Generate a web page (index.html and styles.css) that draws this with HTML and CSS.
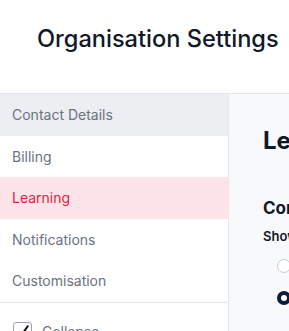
FILE: index.html
```html
<!DOCTYPE html>
<html lang="en">
<head>
    <meta charset="UTF-8">
    <meta name="viewport" content="width=device-width, initial-scale=1.0">
    <title>Organisation Settings</title>
    <link rel="stylesheet" href="styles.css">
</head>
<body>
    <div id="page">
        <header class="page-header">
            <h1>Organisation Settings</h1>
        </header>
        <div id="settings">
            <nav class="sidebar">
                <ul class="menu">
                    <li class="menu-item hover">Contact Details</li>
                    <li class="menu-item">Billing</li>
                    <li class="menu-item active">Learning</li>
                    <li class="menu-item">Notifications</li>
                    <li class="menu-item">Customisation</li>
                </ul>
                <label class="collapse">
                    <span class="box">
                        <svg width="18" height="18" viewBox="0 0 18 18"><path d="M4 10.5 L7.5 14 L14.5 4" fill="none" stroke="#111" stroke-width="2.2" stroke-linecap="round" stroke-linejoin="round"/></svg>
                    </span>
                    <span>Collapse</span>
                </label>
            </nav>
            <main class="panel">
                <h2>Learning</h2>
                <h3>Content visibility</h3>
                <p class="question">Show completed courses to learners</p>
                <label class="radio">
                    <span class="dot"></span>
                    <span>Hide</span>
                </label>
                <label class="radio">
                    <span class="dot checked"></span>
                    <span>Show</span>
                </label>
            </main>
        </div>
    </div>
</body>
</html>
```

FILE: styles.css
```css
body {
    margin: 0;
    padding: 0;
    font-family: Inter, "Noto Sans", sans-serif;
    color: #111827;
    overflow: hidden;
}

#page {
    width: 100%;
    min-height: 100vh;
}

.page-header {
    height: 94px;
    padding-left: 37px;
    border-bottom: 1px solid #e5e7eb;
    box-sizing: border-box;
}

.page-header h1 {
    margin: 0;
    padding-top: 24px;
    font-size: 23.6px;
    line-height: 30px;
    font-weight: 500;
    white-space: nowrap;
}

#settings {
    display: flex;
    height: calc(100vh - 94px);
}

.sidebar {
    width: 228px;
    flex-shrink: 0;
    border-right: 1px solid #e5e7eb;
}

.menu {
    list-style: none;
    margin: 0;
    padding: 0;
    border-bottom: 1px solid #e5e7eb;
}

.menu-item {
    padding: 0 12px;
    height: 41.6px;
    line-height: 41.6px;
    font-size: 14px;
    color: #6b7280;
}

.menu-item.hover {
    background-color: #eceef2;
}

.menu-item.active {
    background-color: #fce4e9;
    color: #e11d48;
}

.collapse {
    display: flex;
    align-items: center;
    gap: 10px;
    padding: 19px 13px;
    font-size: 14px;
    color: #6b7280;
}

.collapse .box {
    display: flex;
    align-items: center;
    justify-content: center;
    width: 19px;
    height: 19px;
    border: 1px solid #9ca3af;
    border-radius: 3px;
    box-sizing: border-box;
    background-color: #fff;
}

.panel {
    flex: 1;
    background-color: #f8f9fb;
    padding: 32px 0 0 34px;
    white-space: nowrap;
    overflow: hidden;
}

.panel h2 {
    margin: 0;
    font-size: 24px;
    line-height: 30px;
    font-weight: 700;
}

.panel h3 {
    margin: 41px 0 0;
    font-size: 17px;
    line-height: 22px;
    font-weight: 700;
}

.question {
    margin: 8px 0 5px;
    font-size: 13px;
    line-height: 18px;
    font-weight: 600;
}

.radio {
    display: flex;
    align-items: center;
    gap: 8px;
    padding-left: 14px;
    height: 32px;
    font-size: 14px;
}

.radio .dot {
    width: 14px;
    height: 14px;
    flex-shrink: 0;
    border: 1px solid #c7ccd4;
    border-radius: 50%;
    box-sizing: border-box;
    background-color: #fff;
}

.radio .dot.checked {
    border: 4.5px solid #0f1b3d;
}
```
